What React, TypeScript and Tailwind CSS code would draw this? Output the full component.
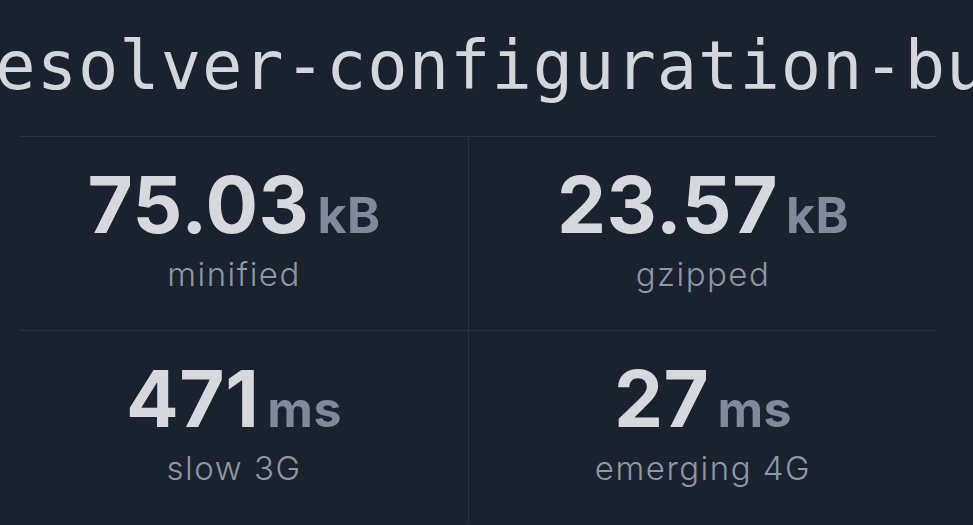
const stats = [
  { value: "75.03", unit: "kB", label: "minified" },
  { value: "23.57", unit: "kB", label: "gzipped" },
  { value: "471", unit: "ms", label: "slow 3G" },
  { value: "27", unit: "ms", label: "emerging 4G" },
];

function Stat({ value, unit, label, left }: { value: string; unit: string; label: string; left: boolean }) {
  return (
    <div className={left ? "w-[469px] border-r border-[#2a3441]" : "w-[468px]"}>
      <div className={left ? "ml-[19px] h-px bg-[#2a3441]" : "h-px bg-[#2a3441]"} />
      <div className="flex h-[193px] flex-col items-center pt-[29px]">
        <div className="flex items-baseline font-['Inter',sans-serif] font-bold leading-none">
          <span className="text-[78px] tracking-[0.5px] text-[#d5d8dd]">{value}</span>
          <span className="ml-[8px] text-[50px] tracking-[0.5px] text-[#7f8a9b]">{unit}</span>
        </div>
        <div className="mt-[14px] font-['Inter',sans-serif] text-[33px] font-light leading-none tracking-[1.5px] text-[#8e97a4]">
          {label}
        </div>
      </div>
    </div>
  );
}

export default function App() {
  return (
    <div className="h-[525px] w-[973px] overflow-hidden bg-[#19222e]">
      <div className="whitespace-nowrap pt-[33px] pb-[36px] font-['DejaVu_Sans_Mono',monospace] text-[67px] leading-none tracking-[1px] text-[#d3d6db]">
        <span className="ml-[-46px] inline-block">resolver-configuration-builder</span>
      </div>
      <div className="flex w-[937px] flex-wrap">
        {stats.map((s, i) => (
          <Stat key={s.label} {...s} left={i % 2 === 0} />
        ))}
      </div>
    </div>
  );
}
